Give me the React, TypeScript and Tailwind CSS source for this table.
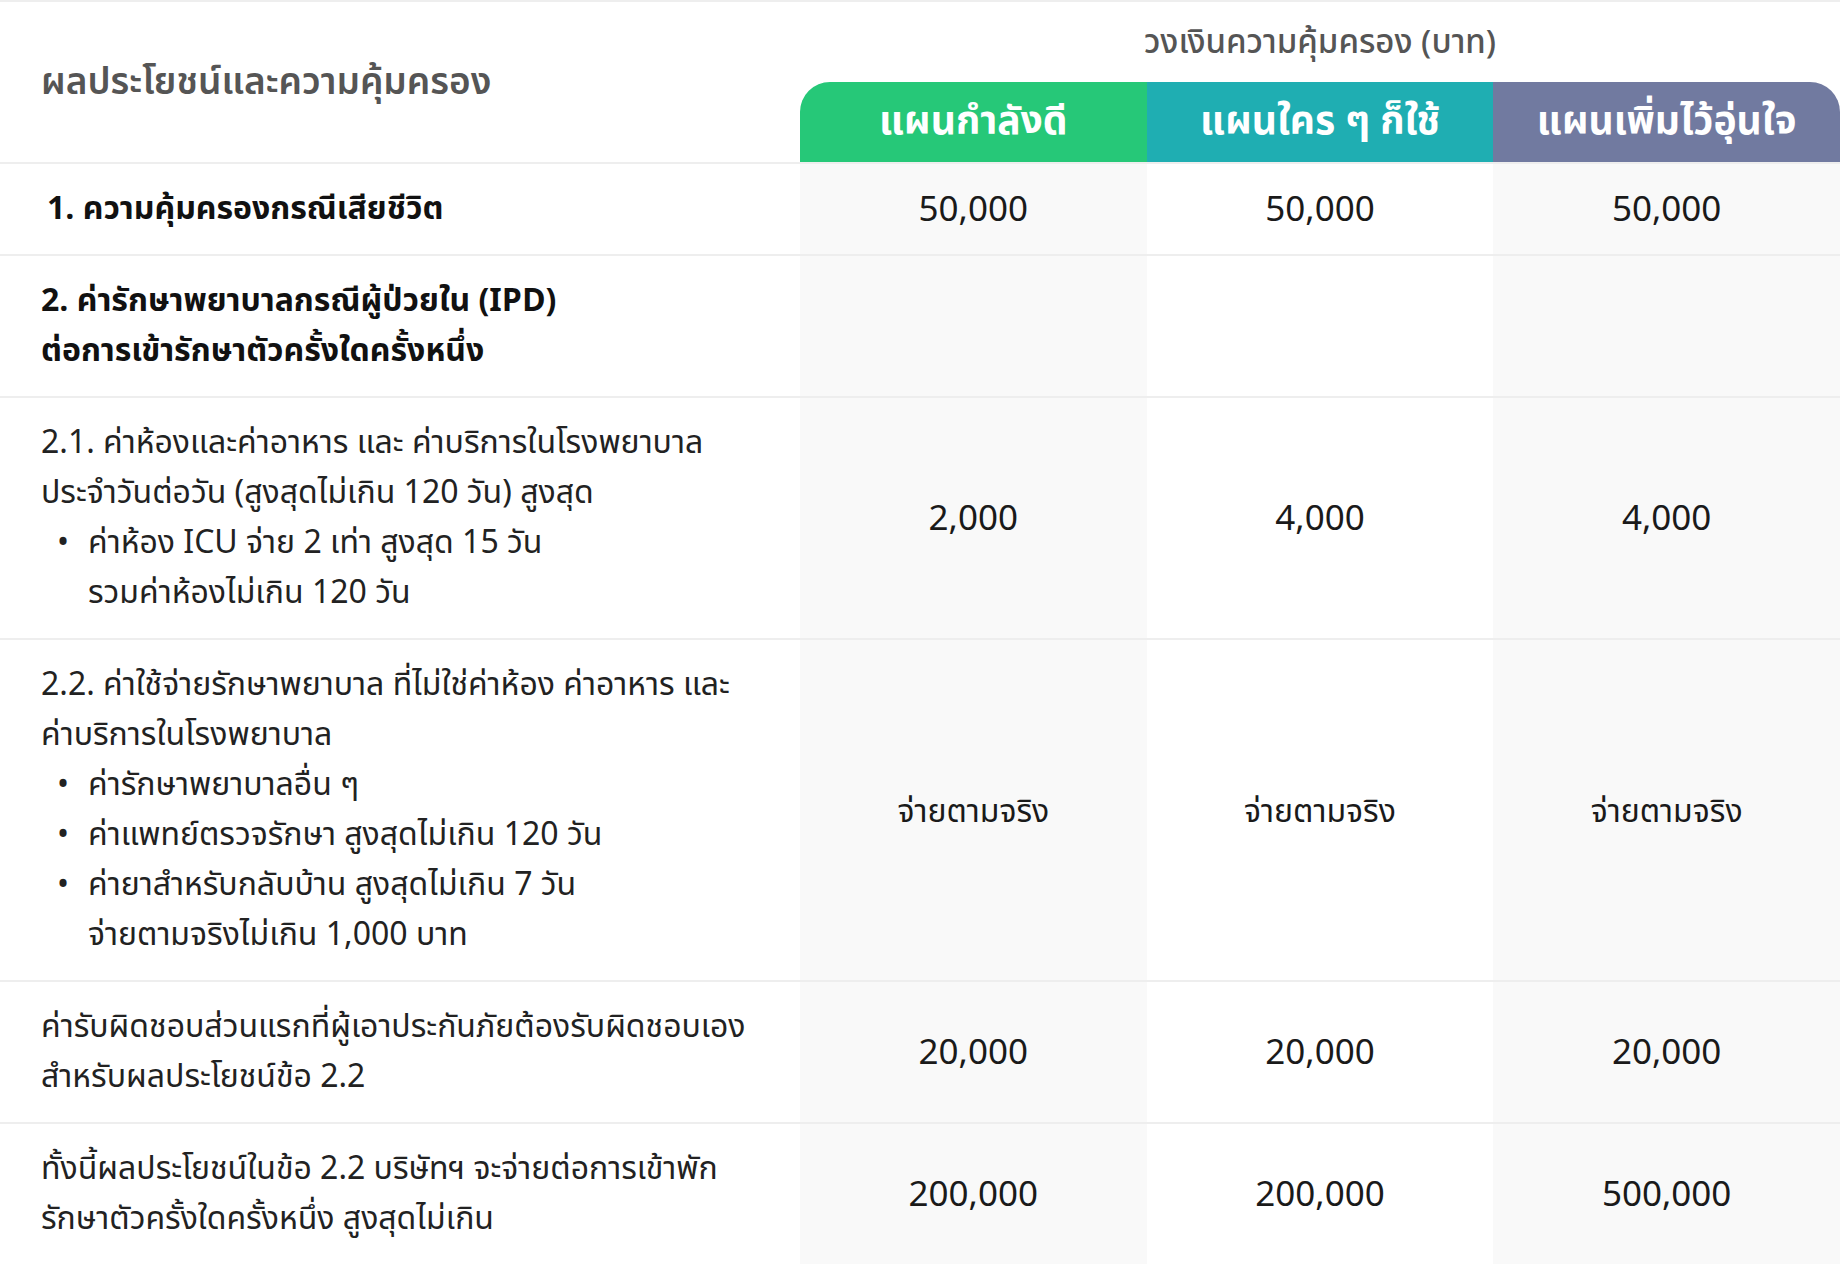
import React from "react";

const font = { fontFamily: "'Noto Sans Thai', 'Noto Sans', 'Liberation Sans', sans-serif" };

type Row = {
  label: React.ReactNode;
  values: string[];
  indent?: boolean;
};

function Bullets({ items }: { items: string[][] }) {
  return (
    <ul>
      {items.map((lines, i) => (
        <li key={i} className="flex">
          <span className="w-[47px] shrink-0 pl-[16px] text-[#222]">•</span>
          <span>
            {lines.map((l, j) => (
              <span key={j} className="block">
                {l}
              </span>
            ))}
          </span>
        </li>
      ))}
    </ul>
  );
}

const rows: Row[] = [
  {
    label: <span className="font-bold text-[#111]">1. ความคุ้มครองกรณีเสียชีวิต</span>,
    values: ["50,000", "50,000", "50,000"],
    indent: true,
  },
  {
    label: (
      <span className="font-bold text-[#111]">
        <span className="block">2. ค่ารักษาพยาบาลกรณีผู้ป่วยใน (IPD)</span>
        <span className="block">ต่อการเข้ารักษาตัวครั้งใดครั้งหนึ่ง</span>
      </span>
    ),
    values: ["", "", ""],
  },
  {
    label: (
      <div>
        <span className="block">2.1. ค่าห้องและค่าอาหาร และ ค่าบริการในโรงพยาบาล</span>
        <span className="block">ประจำวันต่อวัน (สูงสุดไม่เกิน 120 วัน) สูงสุด</span>
        <Bullets items={[["ค่าห้อง ICU จ่าย 2 เท่า สูงสุด 15 วัน", "รวมค่าห้องไม่เกิน 120 วัน"]]} />
      </div>
    ),
    values: ["2,000", "4,000", "4,000"],
  },
  {
    label: (
      <div>
        <span className="block">2.2. ค่าใช้จ่ายรักษาพยาบาล ที่ไม่ใช่ค่าห้อง ค่าอาหาร และ</span>
        <span className="block">ค่าบริการในโรงพยาบาล</span>
        <Bullets
          items={[
            ["ค่ารักษาพยาบาลอื่น ๆ"],
            ["ค่าแพทย์ตรวจรักษา สูงสุดไม่เกิน 120 วัน"],
            ["ค่ายาสำหรับกลับบ้าน สูงสุดไม่เกิน 7 วัน", "จ่ายตามจริงไม่เกิน 1,000 บาท"],
          ]}
        />
      </div>
    ),
    values: ["จ่ายตามจริง", "จ่ายตามจริง", "จ่ายตามจริง"],
  },
  {
    label: (
      <div>
        <span className="block">ค่ารับผิดชอบส่วนแรกที่ผู้เอาประกันภัยต้องรับผิดชอบเอง</span>
        <span className="block">สำหรับผลประโยชน์ข้อ 2.2</span>
      </div>
    ),
    values: ["20,000", "20,000", "20,000"],
  },
  {
    label: (
      <div>
        <span className="block">ทั้งนี้ผลประโยชน์ในข้อ 2.2 บริษัทฯ จะจ่ายต่อการเข้าพัก</span>
        <span className="block">รักษาตัวครั้งใดครั้งหนึ่ง สูงสุดไม่เกิน</span>
      </div>
    ),
    values: ["200,000", "200,000", "500,000"],
  },
];

export default function App() {
  return (
    <div className="w-[1840px] h-[1264px] overflow-hidden bg-white border-t-2 border-[#eeeeee]" style={font}>
      <div className="grid grid-cols-[800px_1fr_1fr_1fr] h-[160px]">
        <div className="flex items-center pl-[41px] pt-[4px] text-[37px] font-semibold text-[#555555]">
          ผลประโยชน์และความคุ้มครอง
        </div>
        <div className="col-span-3 flex flex-col">
          <div className="h-[80px] flex items-center justify-center pt-[4px] text-[33px] font-medium text-[#555555]">
            วงเงินความคุ้มครอง (บาท)
          </div>
          <div className="h-[80px] grid grid-cols-3 text-white font-bold text-[39px]">
            <div className="bg-[#26c878] rounded-tl-[30px] flex items-center justify-center pt-[2px]">แผนกำลังดี</div>
            <div className="bg-[#1faeb2] flex items-center justify-center pt-[2px]">แผนใคร ๆ ก็ใช้</div>
            <div className="bg-[#717aa0] rounded-tr-[30px] flex items-center justify-center pt-[2px]">แผนเพิ่มไว้อุ่นใจ</div>
          </div>
        </div>
      </div>
      {rows.map((r, i) => (
        <div key={i} className="grid grid-cols-[800px_1fr_1fr_1fr] border-t-2 border-[#eeeeee]">
          <div className={`py-5 text-[32px] leading-[50px] text-[#222222] ${r.indent ? "pl-[47px]" : "pl-[41px]"}`}>
            {r.label}
          </div>
          {r.values.map((v, j) => (
            <div
              key={j}
              className={`flex items-center justify-center pt-[3px] leading-[50px] text-[#1a1a1a] ${
                v === "จ่ายตามจริง" ? "text-[32px]" : "text-[35px]"
              } ${j === 1 ? "bg-white" : "bg-[#f9f9f9]"}`}
            >
              {v}
            </div>
          ))}
        </div>
      ))}
    </div>
  );
}
